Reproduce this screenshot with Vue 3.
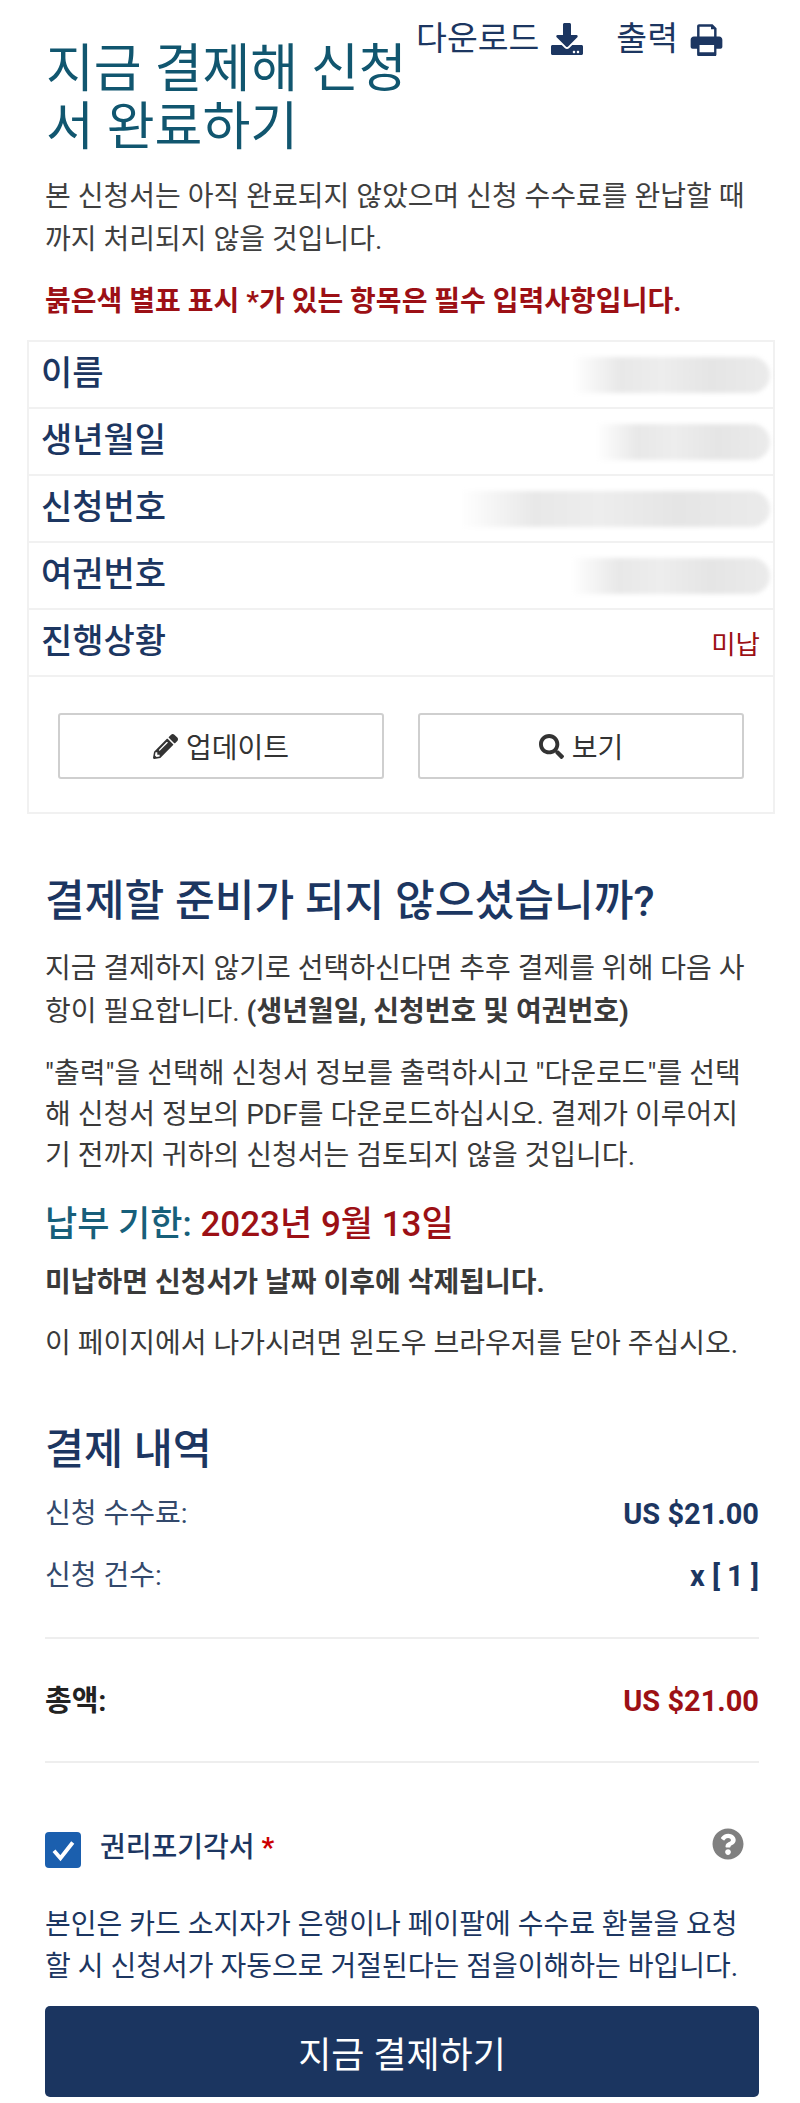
<script setup>
const rows = [
  { label: '이름', mask: 'm1' },
  { label: '생년월일', mask: 'm2' },
  { label: '신청번호', mask: 'm3' },
  { label: '여권번호', mask: 'm4' },
]
</script>

<template>
  <div class="page">
    <header class="head">
      <h1 class="title">지금 결제해 신청<br />서 완료하기</h1>
      <div class="actions">
        <a class="act">다운로드
          <svg class="ico-dl" viewBox="0 0 512 512"><path d="M216 0h80c13.3 0 24 10.7 24 24v168h87.7c17.8 0 26.7 21.5 14.1 34.1L269.7 378.3c-7.5 7.5-19.8 7.5-27.3 0L90.1 226.1c-12.6-12.6-3.7-34.1 14.1-34.1H192V24c0-13.3 10.7-24 24-24zm296 376v112c0 13.3-10.7 24-24 24H24c-13.3 0-24-10.7-24-24V376c0-13.3 10.7-24 24-24h146.7l49 49c20.1 20.1 52.5 20.1 72.6 0l49-49H488c13.3 0 24 10.7 24 24zm-124 88c0-11-9-20-20-20s-20 9-20 20 9 20 20 20 20-9 20-20zm64 0c0-11-9-20-20-20s-20 9-20 20 9 20 20 20 20-9 20-20z" /></svg>
        </a>
        <a class="act act2">출력
          <svg class="ico-pr" viewBox="0 0 512 512"><path fill-rule="evenodd" d="M110 210V50c0-17 13-30 30-30h210l62 62v128h40c28 0 50 22 50 50v110c0 17-13 30-30 30h-62v90c0 17-13 30-30 30H140c-17 0-30-13-30-30v-90H40c-17 0-30-13-30-30V260c0-28 22-50 50-50zm38-152v152h226V98h-48V58zM148 340v112h226V340z" /></svg>
        </a>
      </div>
    </header>

    <p class="intro">본 신청서는 아직 완료되지 않았으며 신청 수수료를 완납할 때<br />까지 처리되지 않을 것입니다.</p>
    <p class="req">붉은색 별표 표시 *가 있는 항목은 필수 입력사항입니다.</p>

    <section class="card">
      <div v-for="r in rows" :key="r.label" class="row">
        <span class="lab">{{ r.label }}</span>
        <span class="mask" :class="r.mask"></span>
      </div>
      <div class="row">
        <span class="lab">진행상황</span>
        <span class="unpaid">미납</span>
      </div>
      <div class="btns">
        <button class="btn">
          <svg class="ico-b" viewBox="0 0 512 512"><path d="M497.9 142.1l-46.1 46.1c-4.7 4.7-12.3 4.7-17 0l-111-111c-4.7-4.7-4.7-12.3 0-17l46.1-46.1c18.7-18.7 49.1-18.7 67.9 0l60.1 60.1c18.8 18.7 18.8 49.1 0 67.9zM284.2 99.8L21.6 362.4.4 483.9c-2.9 16.4 11.4 30.6 27.8 27.8l121.5-21.3 262.6-262.6c4.7-4.7 4.7-12.3 0-17l-111-111c-4.8-4.7-12.4-4.7-17.1 0zM124.1 339.9c-5.5-5.5-5.5-14.3 0-19.8l154-154c5.5-5.5 14.3-5.5 19.8 0s5.5 14.3 0 19.8l-154 154c-5.5 5.5-14.3 5.5-19.8 0zM88 424h48v36.3l-64.5 11.3-31.1-31.1L51.7 376H88v48z" /></svg>
          업데이트
        </button>
        <button class="btn">
          <svg class="ico-b" viewBox="0 0 512 512"><path d="M505 442.7L405.3 343c-4.5-4.5-10.6-7-17-7H372c27.6-35.3 44-79.7 44-128C416 93.1 322.9 0 208 0S0 93.1 0 208s93.1 208 208 208c48.3 0 92.7-16.4 128-44v16.3c0 6.4 2.5 12.5 7 17l99.7 99.7c9.4 9.4 24.6 9.4 33.9 0l28.3-28.3c9.4-9.4 9.4-24.6.1-34zM208 336c-70.7 0-128-57.2-128-128 0-70.7 57.2-128 128-128 70.7 0 128 57.2 128 128 0 70.7-57.2 128-128 128z" /></svg>
          보기
        </button>
      </div>
    </section>

    <h2 class="h2">결제할 준비가 되지 않으셨습니까?</h2>
    <p class="txt p1">지금 결제하지 않기로 선택하신다면 추후 결제를 위해 다음 사<br />항이 필요합니다. <b>(생년월일, 신청번호 및 여권번호)</b></p>
    <p class="txt p2">"출력"을 선택해 신청서 정보를 출력하시고 "다운로드"를 선택<br />해 신청서 정보의 PDF를 다운로드하십시오. 결제가 이루어지<br />기 전까지 귀하의 신청서는 검토되지 않을 것입니다.</p>
    <p class="due"><span class="due-l">납부 기한:</span> <span class="due-d">2023년 9월 13일</span></p>
    <p class="txt warn"><b>미납하면 신청서가 날짜 이후에 삭제됩니다.</b></p>
    <p class="txt leave">이 페이지에서 나가시려면 윈도우 브라우저를 닫아 주십시오.</p>

    <h2 class="h3">결제 내역</h2>
    <div class="line l1"><span>신청 수수료:</span><b>US $21.00</b></div>
    <div class="line l2"><span>신청 건수:</span><b>x [ 1 ]</b></div>
    <hr class="rule r1" />
    <div class="line total"><b>총액:</b><b class="red">US $21.00</b></div>
    <hr class="rule r2" />

    <div class="waiver">
      <span class="check">
        <svg viewBox="0 0 24 24"><path d="M6 12.500l4.300 5L18.500 7" fill="none" stroke="#fff" stroke-width="2.600" /></svg>
      </span>
      <span class="w-lab">권리포기각서 <i class="star">*</i></span>
      <svg class="ico-q" viewBox="0 0 512 512"><path d="M504 256c0 136.997-111.043 248-248 248S8 392.997 8 256C8 119.083 119.043 8 256 8s248 111.083 248 248zM262.655 90c-54.497 0-89.255 22.957-116.549 63.758-3.536 5.286-2.353 12.415 2.715 16.258l34.699 26.31c5.205 3.947 12.621 3.008 16.665-2.122 17.864-22.658 30.113-35.797 57.303-35.797 20.429 0 45.698 13.148 45.698 32.958 0 14.976-12.363 22.667-32.534 33.976C247.128 238.528 216 254.941 216 296v4c0 6.627 5.373 12 12 12h56c6.627 0 12-5.373 12-12v-1.333c0-28.462 83.186-29.647 83.186-106.667 0-58.002-60.165-102-116.531-102zM256 338c-25.365 0-46 20.635-46 46 0 25.364 20.635 46 46 46s46-20.636 46-46c0-25.365-20.635-46-46-46z" /></svg>
    </div>
    <p class="w-txt">본인은 카드 소지자가 은행이나 페이팔에 수수료 환불을 요청<br />할 시 신청서가 자동으로 거절된다는 점을이해하는 바입니다.</p>
    <button class="pay">지금 결제하기</button>
  </div>
</template>

<style scoped>
.page {
  width: 800px;
  height: 2103px;
  overflow: hidden;
  box-sizing: border-box;
  padding: 16px 41px 0 45px;
  background: #fff;
  color: #333;
  font-family: Roboto, "Noto Sans CJK KR", sans-serif;
  font-size: 28px;
}
p, h1, h2 { margin: 0; font-weight: 400; }
.head { display: flex; align-items: flex-start; justify-content: space-between; height: 141px; }
.title { color: #11566f; font-size: 52px; line-height: 58px; padding-top: 25px; white-space: nowrap; margin-left: 1px; }
.actions { display: flex; color: #1c3661; font-size: 33.5px; line-height: 40px; margin-top: 3px; margin-right: 36px; white-space: nowrap; }
.act { display: flex; align-items: center; gap: 12px; }
.act2 { margin-left: 33px; }
.act svg { fill: #1c3661; }
.ico-dl { width: 32px; height: 32px; }
.ico-pr { width: 33px; height: 33px; }
.intro { line-height: 43px; white-space: nowrap; color: #3f3f3f; margin-top: 18px; }
.req { color: #9c1015; font-weight: 700; line-height: 36px; margin-top: 23px; white-space: nowrap; }
.card { margin: 20px -16px 0 -18px; border: 2px solid #f1f1f1; }
.row { display: flex; align-items: center; justify-content: space-between; height: 65px; border-bottom: 2px solid #f1f1f1; padding-left: 12px; }
.lab { color: #1c3661; font-size: 34px; font-weight: 500; line-height: 1; padding-bottom: 4px; }
.mask { height: 36px; margin-right: 3px; border-radius: 0 18px 18px 0; filter: blur(2px); background: linear-gradient(90deg, #fff 0, #e8e8e8 24%, #ededed 45%, #e5e5e5 70%, #ebebeb 100%); }
.m1 { width: 197px; }
.m2 { width: 174px; }
.m3 { width: 310px; }
.m4 { width: 199px; }
.unpaid { color: #9c1015; font-size: 26.5px; padding-right: 13px; }
.btns { display: flex; justify-content: space-between; padding: 36px 29px 33px; }
.btn { width: 326px; height: 66px; background: #fff; border: 2px solid #cfcfcf; border-radius: 3px; color: #333; font: inherit; font-size: 28px; display: flex; align-items: center; justify-content: center; gap: 8px; }
.ico-b { width: 25px; height: 25px; fill: #333; }
.h2 { color: #1c3661; font-size: 43.2px; font-weight: 500; line-height: 50px; margin-top: 63px; white-space: nowrap; }
.txt { line-height: 43px; white-space: nowrap; color: #3a3a3a; }
.p1 { margin-top: 20px; }
.p2 { margin-top: 20px; line-height: 41px; }
.due { font-size: 35px; font-weight: 500; line-height: 44px; margin-top: 27px; white-space: nowrap; }
.due-l { color: #175f7a; }
.due-d { color: #9c1015; }
.warn { margin-top: 15px; line-height: 42px; }
.leave { margin-top: 19px; line-height: 42px; }
.h3 { color: #1c3661; font-size: 42.5px; font-weight: 500; line-height: 54px; margin-top: 58px; }
.line { display: flex; justify-content: space-between; line-height: 40px; white-space: nowrap; }
.line b { font-weight: 700; color: #1c3661; font-size: 29px; }
.l1 { margin-top: 17px; }
.l2 { margin-top: 22px; }
.l2 span, .l1 span { color: #33496c; }
.rule { border: 0; border-top: 2px solid #eee; margin: 0; }
.r1 { margin-top: 41px; }
.total { margin-top: 42px; }
.total b { color: #222; }
.total .red { color: #9c1015; }
.r2 { margin-top: 40px; }
.waiver { display: flex; align-items: flex-start; margin-top: 69px; height: 36px; }
.check { width: 36px; height: 36px; background: #1b5fae; border-radius: 4px; display: block; }
.check svg { width: 36px; height: 36px; display: block; }
.w-lab { color: #1c3661; font-weight: 500; font-size: 28px; line-height: 30px; margin-left: 19px; margin-top: 1px; flex: 1; }
.star { color: #c00; font-style: normal; font-weight: 700; }
.ico-q { width: 32px; height: 32px; fill: #808080; margin-right: 15px; margin-top: -4px; }
.w-txt { color: #1c3661; line-height: 42px; white-space: nowrap; margin-top: 36px; }
.pay { display: block; width: 714px; height: 91px; background: #1b3560; border: 0; border-radius: 5px; color: #fff; font: inherit; font-size: 36px; margin-top: 18px; }
</style>
